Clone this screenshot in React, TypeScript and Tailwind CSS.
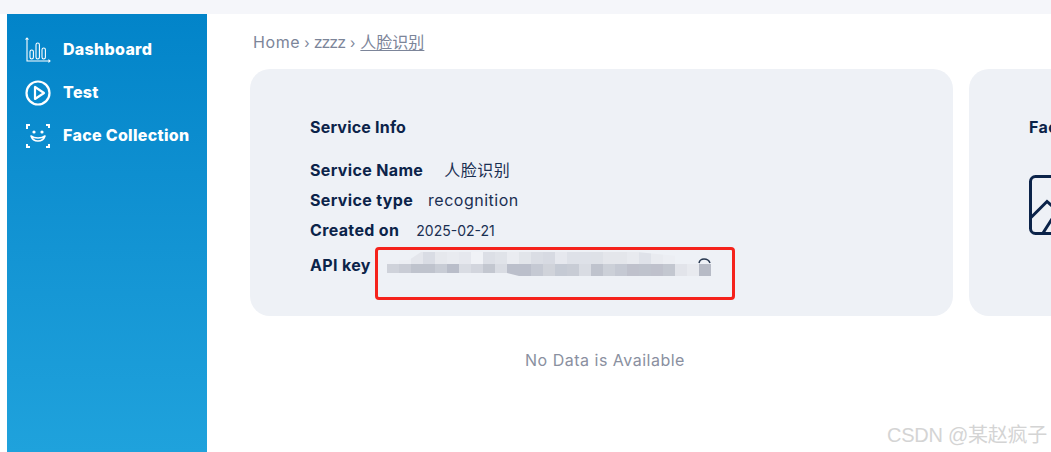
import React from "react";

// blurred-out key, cell colours read off the screenshot
const topCells = ["#eef0f5", "#eceef3", "#e4e6ec", "#d9dce4", "#e6e8ed", "#e9ebf0", "#e6e8ee", "#f0f2f6", "#dcdfe6", "#e0e3e9", "#eaecf1", "#e2e5ea", "#dadde4", "#d7dae2", "#e6e8ee", "#dee1e8", "#dee1e8", "#dee1e7", "#e4e6eb", "#e4e6eb", "#e8eaef", "#dfe2e9", "#e9ebf0", "#eceef3"];
const bottomCells = ["#cfd2da", "#c9ccd5", "#bfc3cd", "#bfc3cd", "#c8ccd5", "#b9bdc9", "#d9dce3", "#d2d5dd", "#c3c7d0", "#d9dce3", "#bbbfcb", "#bbbfcb", "#c5c9d3", "#d0d3da", "#c5cad4", "#c8ccd5", "#d9dce3", "#bfc3cd", "#ccd0d8", "#c5c9d3", "#bfc1cc", "#bfc3cd", "#bfc1cc", "#c3c7d0", "#e2e4ea", "#e8eaef", "#b7bbc6"];

function ChartIcon() {
  return (
    <svg width="26" height="26" viewBox="0 0 26 26" fill="none" stroke="white" strokeWidth="1.1">
      <path d="M2 1v23h23" />
      <path d="M0.6 2.6 2 1l1.4 1.6M23.4 22.6 25 24l-1.6 1.4" />
      <rect x="5" y="13" width="3.4" height="9" rx="1.7" />
      <rect x="11" y="6" width="3.4" height="16" rx="1.7" />
      <rect x="17" y="11" width="3.4" height="11" rx="1.7" />
    </svg>
  );
}

function PlayIcon() {
  return (
    <svg width="26" height="26" viewBox="0 0 26 26" fill="none" stroke="white" strokeWidth="2.200">
      <circle cx="13" cy="13" r="11.500" />
      <path d="M10 7v12l9-6z" strokeLinejoin="round" />
    </svg>
  );
}

function FaceIcon() {
  return (
    <svg width="26" height="26" viewBox="0 0 26 26" fill="none" stroke="white" strokeWidth="2">
      <path d="M2 6V2h3M21 2h3v3M24 21v3h-3M5 24H2v-3" />
      <circle cx="9" cy="9" r="1.600" fill="white" stroke="none" />
      <circle cx="17" cy="9" r="1.600" fill="white" stroke="none" />
      <path d="M6 13c1 3 4 5 7 5s6-2 7-5c-2 1.500-4 2-7 2s-5-.5-7-2z" strokeWidth="1.600" strokeLinejoin="round" />
    </svg>
  );
}

function NavItem({ icon, label }: { icon: React.ReactNode; label: string }) {
  return (
    <div className="flex h-[43px] items-center">
      <div className="flex w-[38px] justify-start">{icon}</div>
      <span className="-mt-[2px] text-[16px] font-extrabold tracking-[0.3px] text-white">{label}</span>
    </div>
  );
}

function InfoRow({ label, value, gap, small }: { label: string; value: string; gap: string; small?: boolean }) {
  return (
    <div className="flex h-[30px] items-center">
      <span className={`text-[16px] font-bold tracking-[0.35px] text-[#0b2349] ${gap}`}>{label}</span>
      <span className={small ? "text-[14px] text-[#1a2f52]" : "text-[16px] tracking-[0.5px] text-[#1a2f52]"}>{value}</span>
    </div>
  );
}

export default function App() {
  return (
    <div className="relative flex h-[452px] w-[1051px] flex-col overflow-hidden bg-white font-['Inter','Noto_Sans_CJK_SC',sans-serif]">
      <div className="h-[14px] shrink-0 bg-[#f5f6fa]" />
      <div className="flex min-h-0 flex-1 pl-[7px]">
        <aside className="w-[200px] shrink-0 bg-gradient-to-b from-[#0284c9] to-[#1fa2dc] pl-[18px] pt-[14px]">
          <NavItem icon={<ChartIcon />} label="Dashboard" />
          <NavItem icon={<PlayIcon />} label="Test" />
          <NavItem icon={<FaceIcon />} label="Face Collection" />
        </aside>
        <main className="min-w-0 flex-1 overflow-hidden pl-[43px]">
          <div className="flex h-[55px] items-center pl-[3px] pt-[1px] text-[16px] text-[#7c8599]">
            <span className="tracking-[0.6px]">Home</span>
            <span className="mx-[4px] text-[14px]">›</span>
            <span className="tracking-[-1px]">zzzz</span>
            <span className="mx-[5px] text-[14px]">›</span>
            <span className="underline underline-offset-2">人脸识别</span>
          </div>
          <div className="flex gap-[16px]">
            <section className="h-[247px] w-[703px] shrink-0 rounded-[20px] bg-[#eef1f6] pl-[60px] pt-[46px]">
              <h2 className="mb-[16px] flex h-[24px] items-center text-[16px] font-bold tracking-[0.2px] text-[#0b2349]">Service Info</h2>
              <InfoRow label="Service Name" value="人脸识别" gap="mr-[21px]" />
              <InfoRow label="Service type" value="recognition" gap="mr-[15px]" />
              <InfoRow label="Created on" value="2025-02-21" gap="mr-[17px]" small />
              <div className="mt-[5px] flex h-[30px] items-center">
                <span className="mr-[16px] text-[16px] font-bold tracking-[0.35px] text-[#0b2349]">API key</span>
                <svg width="324" height="24" viewBox="0 0 324 24" className="-mt-[2px]">
                  <defs>
                    <clipPath id="mosaic">
                      <polygon points="0,9 22,8 34,0 250,0 300,5 324,7 324,24 132,24 120,21 0,21" />
                    </clipPath>
                  </defs>
                  <g clipPath="url(#mosaic)">
                    {topCells.map((c, i) => (
                      <rect key={i} x={i * 12} y="0" width="12" height="13" fill={c} />
                    ))}
                    {bottomCells.map((c, i) => (
                      <rect key={i} x={i * 12} y="12" width="12" height="12" fill={c} />
                    ))}
                  </g>
                  <path d="M312 11c1-4 3-4 5-4s5 1 6 4" fill="none" stroke="#27374f" strokeWidth="1.500" />
                </svg>
              </div>
            </section>
            <section className="h-[247px] w-[400px] shrink-0 rounded-[20px] bg-[#eef1f6] pl-[60px] pt-[46px]">
              <h2 className="mb-[36px] flex h-[24px] items-center text-[16px] font-bold tracking-[0.4px] text-[#0b2349]">Face Collection</h2>
              <svg width="60" height="60" viewBox="0 0 60 60" fill="none" stroke="#0b2349" strokeWidth="3">
                <rect x="1.500" y="1.500" width="57" height="57" rx="5" />
                <path d="M1.500 43 18 26.500l10 9M14 58l14-22" />
              </svg>
            </section>
          </div>
          <p className="mt-[32px] w-[710px] text-center text-[16px] tracking-[0.5px] text-[#8a90a0]">No Data is Available</p>
        </main>
      </div>
      {/* red annotation and watermark sit on top of the page */}
      <div className="absolute left-[375px] top-[247px] h-[53px] w-[360px] rounded-[4px] border-[3px] border-[#f5221b]" />
      <span className="absolute bottom-[4px] right-[4px] text-[20px] leading-[26px] tracking-[-0.25px] text-[#d4d4d4] font-['Liberation_Sans','Noto_Sans_CJK_SC',sans-serif]">CSDN @某赵疯子</span>
    </div>
  );
}
